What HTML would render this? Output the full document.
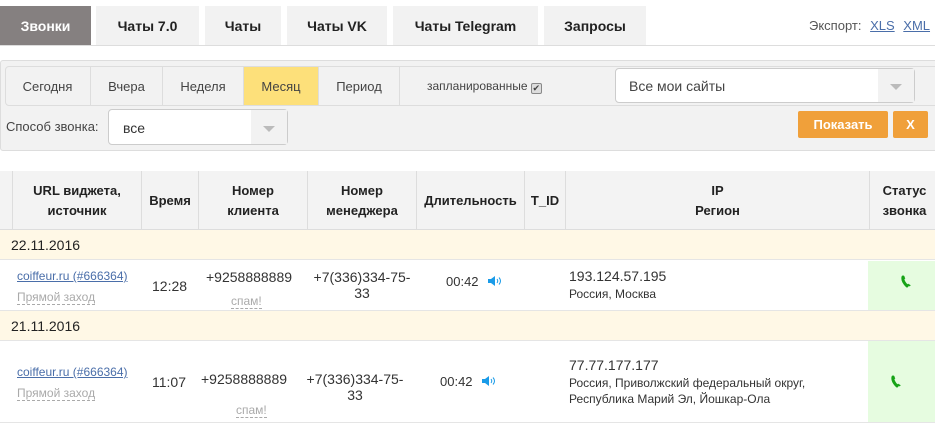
<!DOCTYPE html>
<html><head><meta charset="utf-8"><style>
*{box-sizing:border-box;margin:0;padding:0}
body{width:935px;height:428px;overflow:hidden;background:#fff;font-family:"Liberation Sans","DejaVu Sans",sans-serif;color:#333;position:relative}
.a{position:absolute}
.tab{position:absolute;top:6px;height:39px;background:#f2f2f2;font-weight:bold;font-size:14px;color:#222;display:flex;align-items:center;justify-content:center}
.fb{position:absolute;top:67px;height:38px;font-size:13px;color:#444;display:flex;align-items:center;justify-content:center;border-right:1px solid #ddd}
.th{position:absolute;top:171px;height:59px;font-weight:bold;font-size:13px;color:#222;display:flex;align-items:center;justify-content:center;text-align:center;line-height:20px;border-left:1px solid #ddd}
.t{position:absolute;font-size:13px;color:#333}
.lnk{color:#4a6ea9;text-decoration:underline;font-size:12px}
.src{color:#aaa;font-size:12px;border-bottom:1px dashed #aaa}
</style></head><body>
<div class="tab" style="left:0;width:91px;background:#858080;color:#fff">Звонки</div>
<div class="tab" style="left:96px;width:103px">Чаты 7.0</div>
<div class="tab" style="left:205px;width:76px">Чаты</div>
<div class="tab" style="left:287px;width:100px">Чаты VK</div>
<div class="tab" style="left:393px;width:145px">Чаты Telegram</div>
<div class="tab" style="left:544px;width:102px">Запросы</div>
<div class="a" style="left:0;top:45px;width:935px;height:1px;background:#ddd"></div>
<div class="a" style="left:809px;top:18px;font-size:13px;color:#555">Экспорт: <span style="color:#4a6ea9;text-decoration:underline;margin-left:5px">XLS</span> <span style="color:#4a6ea9;text-decoration:underline;margin-left:5px">XML</span></div>

<div class="a" style="left:0;top:60px;width:940px;height:91px;background:#f2f2f2;border:1px solid #ddd;border-radius:3px"></div>
<div class="a" style="left:5px;top:66px;width:935px;height:40px;border:1px solid #ddd;border-radius:4px"></div>
<div class="fb" style="left:5px;width:86px">Сегодня</div>
<div class="fb" style="left:91px;width:72px">Вчера</div>
<div class="fb" style="left:163px;width:81px">Неделя</div>
<div class="fb" style="left:244px;width:75px;background:#fde07a">Месяц</div>
<div class="fb" style="left:319px;width:81px">Период</div>
<div class="a" style="left:427px;top:79px;font-size:12px;color:#444">запланированные <span style="display:inline-block;width:11px;height:11px;border:1px solid #888;border-radius:2px;background:#ddd;font-size:9px;line-height:9px;text-align:center;vertical-align:-1px">✔</span></div>
<div class="a" style="left:615px;top:68px;width:300px;height:35px;background:#fff;border:1px solid #ccc;border-radius:4px;font-size:14px;color:#444;padding:9px 13px">Все мои сайты</div>
<div class="a" style="left:878px;top:69px;width:36px;height:33px;background:#f2f2f2"></div>
<div class="a" style="left:890px;top:84px;border:6px solid transparent;border-top:6px solid #bbb;border-bottom:0"></div>
<div class="a" style="left:6px;top:119px;font-size:13px;color:#444">Способ звонка:</div>
<div class="a" style="left:108px;top:109px;width:180px;height:36px;background:#fff;border:1px solid #ccc;border-radius:4px;font-size:14px;color:#333;padding:10px 14px">все</div>
<div class="a" style="left:251px;top:110px;width:36px;height:34px;background:#f2f2f2"></div>
<div class="a" style="left:263px;top:126px;border:6px solid transparent;border-top:6px solid #bbb;border-bottom:0"></div>
<div class="a" style="left:798px;top:111px;width:90px;height:27px;background:#f0a03a;border-radius:2px;color:#fff;font-weight:bold;font-size:13px;display:flex;align-items:center;justify-content:center">Показать</div>
<div class="a" style="left:893px;top:111px;width:35px;height:27px;background:#f0a03a;border-radius:2px;color:#fff;font-weight:bold;font-size:13px;display:flex;align-items:center;justify-content:center">X</div>

<div class="a" style="left:0;top:171px;width:935px;height:59px;background:#f3f3f3;border-bottom:1px solid #ddd"></div>
<div class="th" style="left:12px;width:129px">URL виджета,<br>источник</div>
<div class="th" style="left:141px;width:57px">Время</div>
<div class="th" style="left:198px;width:109px">Номер<br>клиента</div>
<div class="th" style="left:307px;width:109px">Номер<br>менеджера</div>
<div class="th" style="left:416px;width:108px">Длительность</div>
<div class="th" style="left:524px;width:41px">T_ID</div>
<div class="th" style="left:565px;width:304px">IP<br>Регион</div>
<div class="th" style="left:869px;width:70px">Статус<br>звонка</div>

<div class="a" style="left:0;top:230px;width:935px;height:30px;background:#fff8e6;border-bottom:1px solid #e5e5e5"></div>
<div class="a" style="left:11px;top:237px;font-size:14px;color:#222">22.11.2016</div>
<div class="a" style="left:868px;top:261px;width:67px;height:49px;background:#e6fce0"></div>
<div class="a" style="left:0;top:310px;width:935px;height:31px;background:#fff8e6;border-top:1px solid #e5e5e5;border-bottom:1px solid #e5e5e5"></div>
<div class="a" style="left:11px;top:318px;font-size:14px;color:#222">21.11.2016</div>
<div class="a" style="left:868px;top:341px;width:67px;height:81px;background:#e6fce0"></div>
<div class="a" style="left:0;top:422px;width:935px;height:1px;background:#e5e5e5"></div>

<div class="t" style="left:17px;top:268px"><span class="lnk">coiffeur.ru (#666364)</span></div>
<div class="t" style="left:17px;top:289px"><span class="src">Прямой заход</span></div>
<div class="t" style="left:152px;top:278px;font-size:14px">12:28</div>
<div class="t" style="left:206px;top:269px;font-size:14px">+9258888889</div>
<div class="t" style="left:231px;top:293px"><span class="src">спам!</span></div>
<div class="t" style="left:312px;top:269px;width:100px;text-align:center;font-size:14px;line-height:16px">+7(336)334-75-<br>33</div>
<div class="t" style="left:446px;top:274px;font-size:13px">00:42</div>
<svg class="a" style="left:487px;top:275px" width="16" height="12" viewBox="0 0 16 12"><path d="M1 4h3l4-3v10L4 8H1z" fill="#1a9be8"/><path d="M10 4q1.5 2 0 4M12 2.5q3 3.5 0 7" stroke="#1a9be8" stroke-width="1" fill="none"/></svg>
<div class="t" style="left:569px;top:268px;font-size:14px">193.124.57.195</div>
<div class="t" style="left:569px;top:287px;font-size:12px">Россия, Москва</div>
<svg class="a" style="left:901px;top:275px" width="12" height="13" viewBox="0 0 12 13"><path d="M2 2Q1 6 6 11" stroke="#17a317" stroke-width="3" fill="none" stroke-linecap="round"/><path d="M1.5 1.5l1.5-0.8 1.3 2.8-1.5 1zM6 10l1-1.4 2.8 1.6-1.2 1.2z" fill="#17a317"/></svg>

<div class="t" style="left:17px;top:364px"><span class="lnk">coiffeur.ru (#666364)</span></div>
<div class="t" style="left:17px;top:385px"><span class="src">Прямой заход</span></div>
<div class="t" style="left:152px;top:374px;font-size:14px">11:07</div>
<div class="t" style="left:201px;top:371px;font-size:14px">+9258888889</div>
<div class="t" style="left:236px;top:402px"><span class="src">спам!</span></div>
<div class="t" style="left:305px;top:371px;width:100px;text-align:center;font-size:14px;line-height:16px">+7(336)334-75-<br>33</div>
<div class="t" style="left:440px;top:374px;font-size:13px">00:42</div>
<svg class="a" style="left:481px;top:375px" width="16" height="12" viewBox="0 0 16 12"><path d="M1 4h3l4-3v10L4 8H1z" fill="#1a9be8"/><path d="M10 4q1.5 2 0 4M12 2.5q3 3.5 0 7" stroke="#1a9be8" stroke-width="1" fill="none"/></svg>
<div class="t" style="left:569px;top:357px;font-size:14px">77.77.177.177</div>
<div class="t" style="left:569px;top:375px;font-size:12px;line-height:16px">Россия, Приволжский федеральный округ,<br>Республика Марий Эл, Йошкар-Ола</div>
<svg class="a" style="left:891px;top:375px" width="12" height="13" viewBox="0 0 12 13"><path d="M2 2Q1 6 6 11" stroke="#17a317" stroke-width="3" fill="none" stroke-linecap="round"/><path d="M1.5 1.5l1.5-0.8 1.3 2.8-1.5 1zM6 10l1-1.4 2.8 1.6-1.2 1.2z" fill="#17a317"/></svg>
</body></html>
